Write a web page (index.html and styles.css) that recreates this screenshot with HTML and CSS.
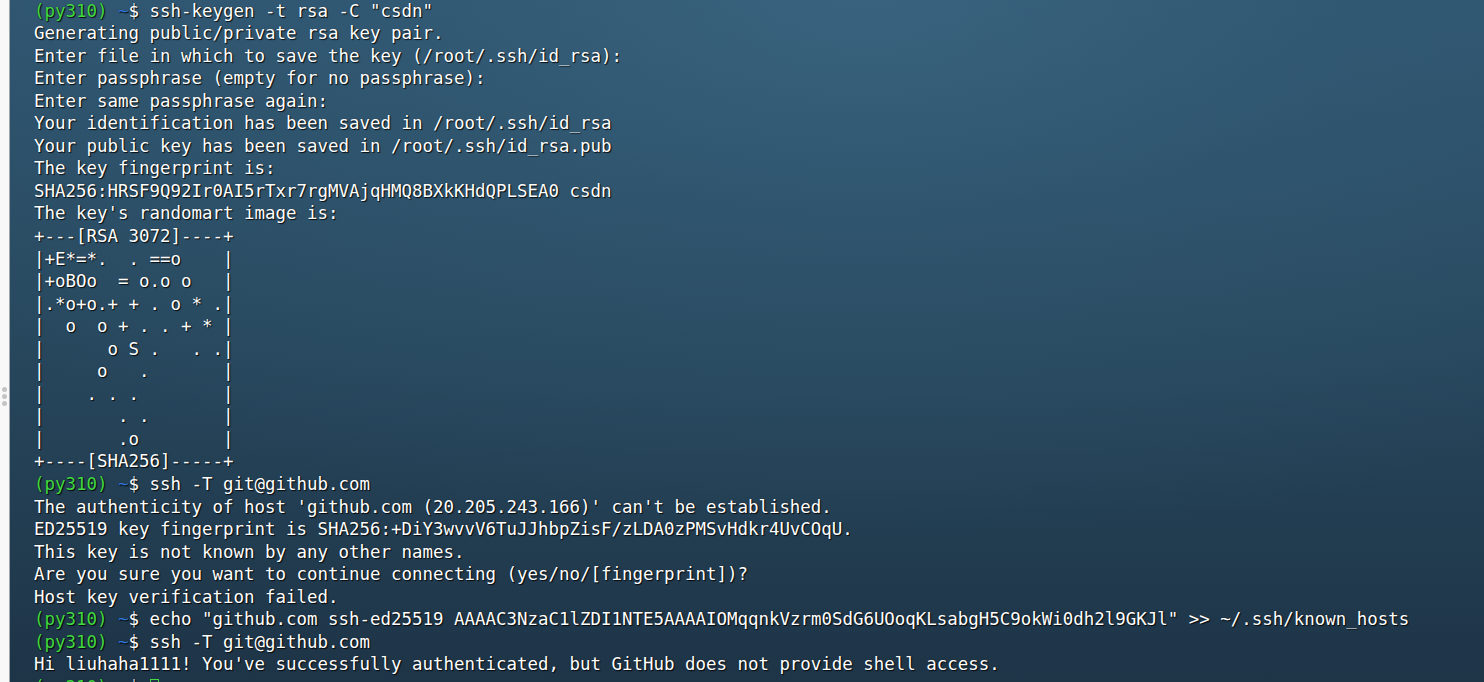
FILE: index.html
```html
<!DOCTYPE html>
<html lang="en">
<head>
<meta charset="utf-8">
<title>Terminal</title>
<link rel="stylesheet" href="styles.css">
</head>
<body>
<div class="window">
  <aside class="gutter">
    <span class="dot"></span>
    <span class="dot"></span>
    <span class="dot"></span>
  </aside>
  <main class="term">
<pre class="out"><span class="env">(py310)</span> <span class="tilde">~</span>$ ssh-keygen -t rsa -C "csdn"
Generating public/private rsa key pair.
Enter file in which to save the key (/root/.ssh/id_rsa):
Enter passphrase (empty for no passphrase):
Enter same passphrase again:
Your identification has been saved in /root/.ssh/id_rsa
Your public key has been saved in /root/.ssh/id_rsa.pub
The key fingerprint is:
SHA256:HRSF9Q92Ir0AI5rTxr7rgMVAjqHMQ8BXkKHdQPLSEA0 csdn
The key's randomart image is:
+---[RSA 3072]----+
|+E*=*.  . ==o    |
|+oBOo  = o.o o   |
|.*o+o.+ + . o * .|
|  o  o + . . + * |
|      o S .   . .|
|     o   .       |
|    . . .        |
|       . .       |
|       .o        |
+----[SHA256]-----+
<span class="env">(py310)</span> <span class="tilde">~</span>$ ssh -T git@github.com
The authenticity of host 'github.com (20.205.243.166)' can't be established.
ED25519 key fingerprint is SHA256:+DiY3wvvV6TuJJhbpZisF/zLDA0zPMSvHdkr4UvCOqU.
This key is not known by any other names.
Are you sure you want to continue connecting (yes/no/[fingerprint])?
Host key verification failed.
<span class="env">(py310)</span> <span class="tilde">~</span>$ echo "github.com ssh-ed25519 AAAAC3NzaC1lZDI1NTE5AAAAIOMqqnkVzrm0SdG6UOoqKLsabgH5C9okWi0dh2l9GKJl" &gt;&gt; ~/.ssh/known_hosts
<span class="env">(py310)</span> <span class="tilde">~</span>$ ssh -T git@github.com
Hi liuhaha1111! You've successfully authenticated, but GitHub does not provide shell access.
<span class="env">(py310)</span> <span class="tilde">~</span>$ <span class="cursor"> </span></pre>
  </main>
</div>
</body>
</html>
```

FILE: styles.css
```css
html, body {
  margin: 0;
  padding: 0;
  height: 100%;
  overflow: hidden;
}

.window {
  display: flex;
  width: 1484px;
  height: 682px;
  overflow: hidden;
}

.gutter {
  width: 10px;
  flex: 0 0 10px;
  background: #f8f8f8;
  border-right: 1px solid #9ea4a8;
  display: flex;
  flex-direction: column;
  align-items: center;
  gap: 2px;
  padding-top: 387px;
  box-sizing: border-box;
}

.dot {
  width: 5px;
  height: 5px;
  border-radius: 50%;
  background: #c4c4c4;
}

.term {
  flex: 1;
  overflow: hidden;
  background:
    radial-gradient(ellipse 75% 80% at 58% 0%, rgba(60, 104, 132, 0.7) 0%, rgba(52, 92, 118, 0.45) 45%, rgba(40, 72, 96, 0) 100%),
    linear-gradient(to bottom, #2f5570 0%, #28495f 45%, #1e3447 100%);
  padding-left: 24px;
}

.out {
  margin: -0.5px 0 0 0;
  font-family: "DejaVu Sans Mono", monospace;
  font-size: 17.44px;
  line-height: 22.54px;
  color: #ffffff;
  white-space: pre;
  text-shadow: 1px 1px 1px rgba(0, 0, 0, 0.85), 0 0 1px rgba(0, 0, 0, 0.5);
}

.env {
  color: #42d942;
}

.tilde {
  color: #2f74d6;
}

.cursor {
  display: inline-block;
  width: 9px;
  height: 19px;
  border: 1px solid #42d942;
  vertical-align: -4px;
  box-sizing: border-box;
}
```
